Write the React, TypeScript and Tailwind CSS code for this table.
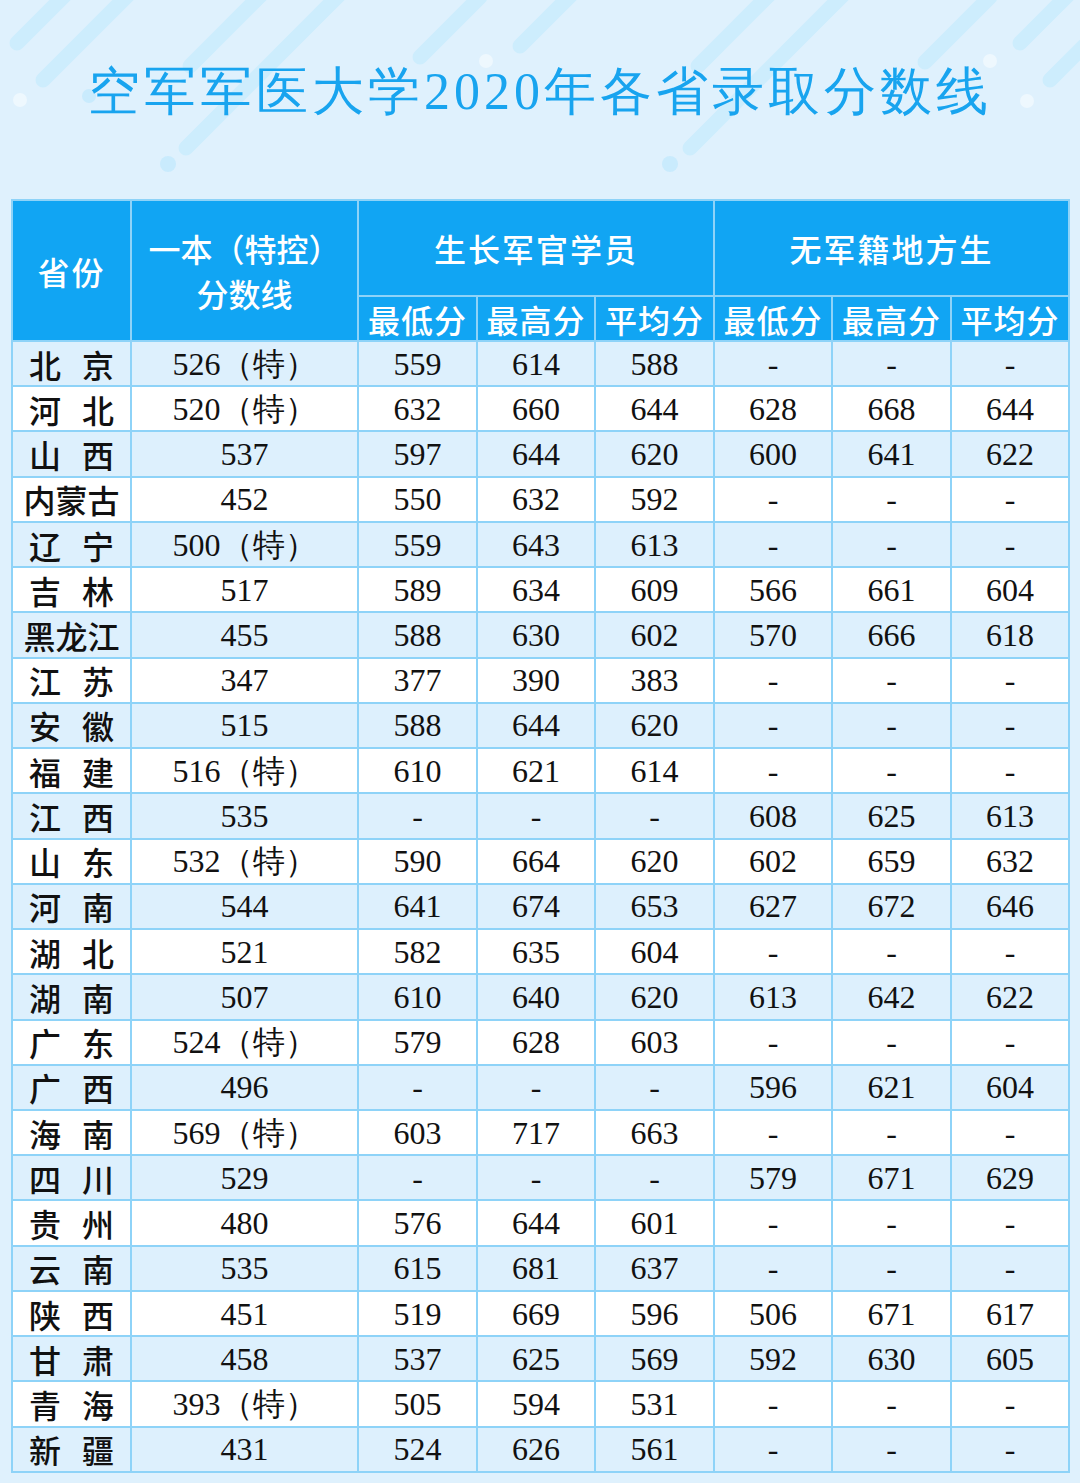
import React from 'react';

type Row = {
  name: string;
  line: string;
  a: [string, string, string];
  b: [string, string, string];
};

const rows: Row[] = [
  { name: '北京', line: '526（特）', a: ['559', '614', '588'], b: ['-', '-', '-'] },
  { name: '河北', line: '520（特）', a: ['632', '660', '644'], b: ['628', '668', '644'] },
  { name: '山西', line: '537', a: ['597', '644', '620'], b: ['600', '641', '622'] },
  { name: '内蒙古', line: '452', a: ['550', '632', '592'], b: ['-', '-', '-'] },
  { name: '辽宁', line: '500（特）', a: ['559', '643', '613'], b: ['-', '-', '-'] },
  { name: '吉林', line: '517', a: ['589', '634', '609'], b: ['566', '661', '604'] },
  { name: '黑龙江', line: '455', a: ['588', '630', '602'], b: ['570', '666', '618'] },
  { name: '江苏', line: '347', a: ['377', '390', '383'], b: ['-', '-', '-'] },
  { name: '安徽', line: '515', a: ['588', '644', '620'], b: ['-', '-', '-'] },
  { name: '福建', line: '516（特）', a: ['610', '621', '614'], b: ['-', '-', '-'] },
  { name: '江西', line: '535', a: ['-', '-', '-'], b: ['608', '625', '613'] },
  { name: '山东', line: '532（特）', a: ['590', '664', '620'], b: ['602', '659', '632'] },
  { name: '河南', line: '544', a: ['641', '674', '653'], b: ['627', '672', '646'] },
  { name: '湖北', line: '521', a: ['582', '635', '604'], b: ['-', '-', '-'] },
  { name: '湖南', line: '507', a: ['610', '640', '620'], b: ['613', '642', '622'] },
  { name: '广东', line: '524（特）', a: ['579', '628', '603'], b: ['-', '-', '-'] },
  { name: '广西', line: '496', a: ['-', '-', '-'], b: ['596', '621', '604'] },
  { name: '海南', line: '569（特）', a: ['603', '717', '663'], b: ['-', '-', '-'] },
  { name: '四川', line: '529', a: ['-', '-', '-'], b: ['579', '671', '629'] },
  { name: '贵州', line: '480', a: ['576', '644', '601'], b: ['-', '-', '-'] },
  { name: '云南', line: '535', a: ['615', '681', '637'], b: ['-', '-', '-'] },
  { name: '陕西', line: '451', a: ['519', '669', '596'], b: ['506', '671', '617'] },
  { name: '甘肃', line: '458', a: ['537', '625', '569'], b: ['592', '630', '605'] },
  { name: '青海', line: '393（特）', a: ['505', '594', '531'], b: ['-', '-', '-'] },
  { name: '新疆', line: '431', a: ['524', '626', '561'], b: ['-', '-', '-'] },
];

// diagonal stripes behind the title: [x1, y1, x2, y2]
const stripes: [number, number, number, number][] = [
  [17, 43, 70, -10],
  [43, 80, 140, -17],
  [190, 66, 266, -10],
  [186, 148, 345, -11],
  [420, 57, 480, -3],
  [520, 46, 575, -9],
  [690, 148, 850, -12],
  [698, 66, 775, -11],
  [925, 62, 990, -3],
  [1020, 43, 1074, -11],
  [1050, 80, 1100, 30],
];

function Backdrop() {
  return (
    <svg className="absolute left-0 top-0" width="1080" height="200" viewBox="0 0 1080 200">
      {stripes.map(([x1, y1, x2, y2], i) => (
        <line key={i} x1={x1} y1={y1} x2={x2} y2={y2} stroke="#cdedfd" strokeWidth="15" strokeLinecap="round" />
      ))}
      <circle cx="20" cy="100" r="7" fill="#eef8fe" />
      <circle cx="486" cy="61" r="7" fill="#eef8fe" />
      <circle cx="990" cy="61" r="7" fill="#eef8fe" />
      <circle cx="1027" cy="101" r="7" fill="#eef8fe" />
      <circle cx="89" cy="96" r="7" fill="#c9ebfd" />
      <circle cx="168" cy="164" r="8" fill="#c9ebfd" />
      <circle cx="670" cy="164" r="8" fill="#c9ebfd" />
    </svg>
  );
}

const cell = 'border-2 border-[#8ed3f8] text-center align-middle p-0 overflow-hidden';
const num = '[font-family:Liberation_Serif] text-[32px] leading-[38px] text-[#111]';
const head = '[font-family:Noto_Sans_CJK_SC] text-[32px] font-medium';

export default function App() {
  return (
    <div className="relative w-[1080px] h-[1483px] bg-[#dff1fd] overflow-hidden">
      <Backdrop />
      <div className="relative h-[199px] flex items-start justify-center pt-[62px]">
        <h1 className="[font-family:Liberation_Serif] text-[52px] leading-[60px] tracking-[4px] text-[#18a4ef] font-normal">
          空军军医大学2020年各省录取分数线
        </h1>
      </div>

      <table className="relative ml-[11px] w-[1057px] border-collapse table-fixed border-2 border-[#8ed3f8]">
        <colgroup>
          <col className="w-[119px]" />
          <col className="w-[227px]" />
          <col className="w-[119px]" />
          <col className="w-[118px]" />
          <col className="w-[119px]" />
          <col className="w-[118px]" />
          <col className="w-[119px]" />
          <col className="w-[118px]" />
        </colgroup>
        <thead className="bg-[#11a5f3] text-white">
          <tr className="h-[96px]">
            <th rowSpan={2} className={`${cell} ${head} leading-[40px] tracking-[2px]`}>省份</th>
            <th rowSpan={2} className={`${cell} ${head} leading-[45px]`}>
              一本（特控）
              <br />
              分数线
            </th>
            <th colSpan={3} className={`${cell} ${head} leading-[40px] tracking-[2px]`}>生长军官学员</th>
            <th colSpan={3} className={`${cell} ${head} leading-[40px] tracking-[2px]`}>无军籍地方生</th>
          </tr>
          <tr className="h-[45px]">
            {['最低分', '最高分', '平均分', '最低分', '最高分', '平均分'].map((t, i) => (
              <th key={i} className={`${cell} ${head} leading-[40px] tracking-[1px]`}>{t}</th>
            ))}
          </tr>
        </thead>
        <tbody>
          {rows.map((r, i) => (
            <tr key={r.name} className={`h-[45.24px] ${i % 2 === 0 ? 'bg-[#ddf0fd]' : 'bg-white'}`}>
              <td className={cell}>
                <div
                  className={`flex [font-family:Noto_Sans_CJK_SC] font-medium text-[32px] leading-[38px] text-[#111] ${
                    r.name.length === 2 ? 'justify-between px-[16px]' : 'justify-center'
                  }`}
                >
                  {r.name.split('').map((c, k) => (
                    <span key={k}>{c}</span>
                  ))}
                </div>
              </td>
              <td className={`${cell} ${num}`}>{r.line}</td>
              {[...r.a, ...r.b].map((v, k) => (
                <td key={k} className={`${cell} ${num}`}>{v}</td>
              ))}
            </tr>
          ))}
        </tbody>
      </table>
    </div>
  );
}
